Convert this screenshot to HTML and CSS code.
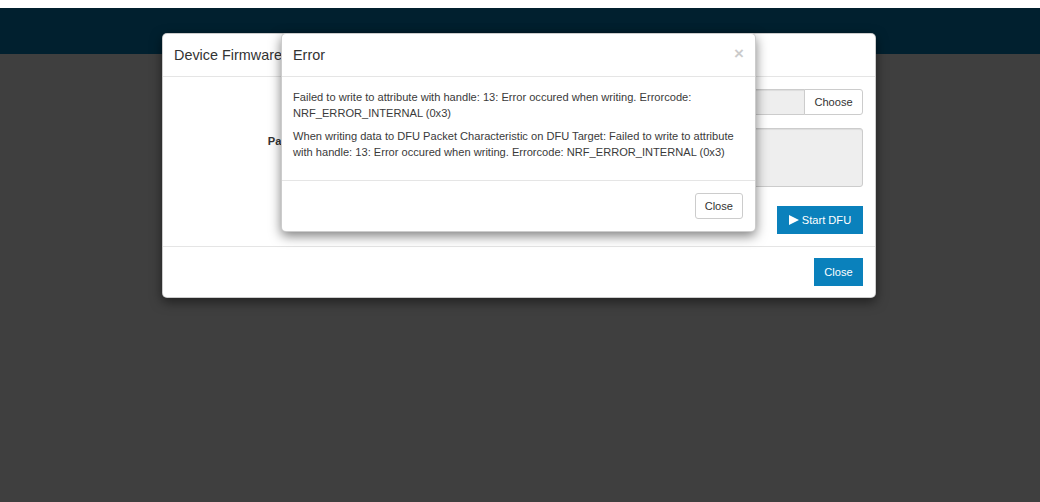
FILE: index.html
```html
<!DOCTYPE html>
<html lang="en">
<head>
<meta charset="utf-8">
<title>Device Firmware Update</title>
<link rel="stylesheet" href="styles.css">
</head>
<body>
<div class="app">
  <div class="top-strip"></div>
  <header class="navbar"></header>
  <main class="backdrop"></main>
</div>

<div class="modal modal-dfu">
  <div class="modal-header">
    <h4 class="modal-title">Device Firmware</h4>
  </div>
  <div class="modal-body">
    <div class="form-grid">
      <span class="ctl-label row-file"></span>
      <div class="input-group row-file">
        <input class="form-control" type="text" readonly>
        <button class="btn btn-default btn-addon" type="button">Choose</button>
      </div>
      <label class="ctl-label row-pkg">Package info:</label>
      <textarea class="form-control textarea row-pkg" disabled></textarea>
      <div class="actions">
        <button class="btn btn-primary btn-start" type="button"><svg class="play" viewBox="0 0 10 10" width="10" height="10"><path d="M0 0 L10 5 L0 10 Z" fill="#fff"/></svg>Start DFU</button>
      </div>
    </div>
  </div>
  <div class="modal-footer footer-dfu">
    <button class="btn btn-primary btn-close" type="button">Close</button>
  </div>
</div>

<div class="modal modal-error">
  <div class="modal-header">
    <span class="close-x">×</span>
    <h4 class="modal-title">Error</h4>
  </div>
  <div class="modal-body error-body">
    <p>Failed to write to attribute with handle: 13: Error occured when writing. Errorcode: NRF_ERROR_INTERNAL (0x3)</p>
    <p>When writing data to DFU Packet Characteristic on DFU Target: Failed to write to attribute with handle: 13: Error occured when writing. Errorcode: NRF_ERROR_INTERNAL (0x3)</p>
  </div>
  <div class="modal-footer">
    <button class="btn btn-default" type="button">Close</button>
  </div>
</div>
</body>
</html>
```

FILE: styles.css
```css
* { box-sizing: border-box; }

html, body {
  margin: 0;
  padding: 0;
  height: 100%;
}

body {
  font-family: "Liberation Sans", Arial, Helvetica, sans-serif;
  font-size: 11.1px;
  line-height: 16px;
  color: #3a3a3a;
  background: #3f3f3f;
  overflow: hidden;
}

.app {
  display: flex;
  flex-direction: column;
  height: 100vh;
}

.top-strip {
  height: 8px;
  background: #ffffff;
  flex: none;
}

.navbar {
  height: 46px;
  background: #01202f;
  flex: none;
}

.backdrop {
  flex: 1;
  background: #3f3f3f;
}

/* Modals (overlays) */
.modal {
  position: absolute;
  top: 33px;
  background: #fff;
  border: 1px solid rgba(0, 0, 0, 0.2);
  border-radius: 5px;
  box-shadow: 0 4px 12px rgba(0, 0, 0, 0.5);
}

.modal-dfu {
  left: 162px;
  width: 714px;
}

.modal-error {
  left: 281px;
  width: 475px;
}

.modal-header {
  padding: 12px 12px 12px 11px;
  border-bottom: 1px solid #e5e5e5;
}

.modal-title {
  margin: 0;
  font-size: 14.4px;
  line-height: 18px;
  font-weight: normal;
  color: #333;
  white-space: nowrap;
}

.close-x {
  float: right;
  font-size: 17px;
  font-weight: bold;
  line-height: 18px;
  color: #000;
  opacity: 0.2;
  margin-top: -1px;
  margin-right: -1px;
}

.modal-body {
  padding: 12px;
}

.error-body {
  padding: 12px 12px 13px 11px;
}

.error-body p {
  margin: 0 0 7px;
}

.modal-footer {
  padding: 12px;
  border-top: 1px solid #e5e5e5;
  display: flex;
  justify-content: flex-end;
}

.footer-dfu {
  padding: 11px 12px;
}

/* Form */
.form-grid {
  display: grid;
  grid-template-columns: 165px 1fr;
  column-gap: 12px;
}

.ctl-label {
  text-align: right;
  font-weight: bold;
  padding-top: 5px;
  line-height: 16px;
  color: #333;
  white-space: nowrap;
}

.row-file { margin-bottom: 13px; }
.row-pkg { margin-bottom: 19px; }

.input-group {
  display: flex;
  height: 26px;
}

.form-control {
  font: inherit;
  color: #555;
  background: #eeeeee;
  border: 1px solid #ccc;
  border-radius: 3px;
  box-shadow: inset 0 1px 1px rgba(0, 0, 0, 0.075);
}

.input-group .form-control {
  flex: 1;
  min-width: 0;
  height: 26px;
  border-radius: 3px 0 0 3px;
}

.textarea {
  height: 59px;
  resize: none;
  display: block;
  width: 100%;
}

.actions {
  grid-column: 1 / -1;
  display: flex;
  justify-content: flex-end;
}

.btn {
  font: inherit;
  font-size: 11.1px;
  line-height: 16px;
  height: 26px;
  padding: 0 9px;
  border: 1px solid #ccc;
  border-radius: 3px;
  background: #fff;
  color: #333;
  display: inline-flex;
  align-items: center;
  justify-content: center;
  cursor: pointer;
}

.btn-addon {
  width: 59px;
  margin-left: -1px;
  border-radius: 0 3px 3px 0;
}

.btn-primary {
  height: 28px;
  background: #0a81bc;
  border-color: #0a81bc;
  color: #fff;
  border-radius: 0;
  padding: 0 10px;
}

.btn-close {
  width: 49px;
  padding: 0;
}

.btn-start {
  width: 86px;
  padding: 0;
}

.play {
  margin-right: 3px;
  flex: none;
}
```
